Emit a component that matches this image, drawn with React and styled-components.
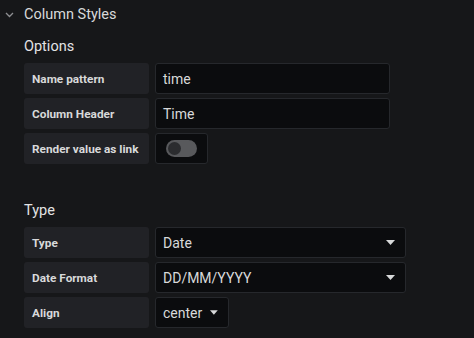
import React from "react";
import styled, { createGlobalStyle } from "styled-components";

const Global = createGlobalStyle`
  html, body { margin: 0; padding: 0; background: #161719; }
  body { font-family: Roboto, "Liberation Sans", sans-serif; color: #d8d9da; }
  #root { width: 474px; height: 338px; overflow: hidden; background: #161719; }
`;

const Page = styled.div`
  display: flex;
  flex-direction: column;
`;

const Header = styled.div`
  display: flex;
  align-items: center;
  height: 29px;
  padding-left: 5px;
  gap: 10px;
  font-size: 14.5px;
  color: #d8d9da;
`;

const Body = styled.div`
  display: flex;
  flex-direction: column;
  padding-left: 24px;
`;

const SectionTitle = styled.div`
  font-size: 14.5px;
  line-height: 20px;
  margin-top: ${(p) => p.$top}px;
  margin-bottom: 6px;
  color: #e3e3e4;
`;

const Rows = styled.div`
  display: flex;
  flex-direction: column;
  gap: 4px;
`;

const Row = styled.div`
  display: flex;
  gap: 6px;
  height: 31px;
`;

const Label = styled.div`
  width: 125px;
  box-sizing: border-box;
  background: #212226;
  border-radius: 3px;
  display: flex;
  align-items: center;
  padding-left: 8px;
  font-size: 11.8px;
  font-weight: 700;
  color: #d8d9da;
`;

const Field = styled.div`
  width: ${(p) => p.$w}px;
  box-sizing: border-box;
  background: #0b0c0e;
  border: 1px solid #26282c;
  border-radius: 3px;
  display: flex;
  align-items: center;
  justify-content: ${(p) => (p.$center ? "center" : "space-between")};
  padding: 0 ${(p) => (p.$center ? 0 : 10)}px 0 ${(p) => (p.$center ? 0 : 7)}px;
  gap: 8px;
  font-size: 14px;
  color: #d8d9da;
`;

const Toggle = styled.div`
  width: 31px;
  height: 17px;
  border-radius: 9px;
  background: #58595c;
  display: flex;
  align-items: center;
  padding-left: 2px;
  box-sizing: border-box;
`;

const Knob = styled.div`
  width: 13px;
  height: 13px;
  border-radius: 50%;
  background: #2b2c2f;
`;

const Caret = () => (
  <svg width="9" height="5" viewBox="0 0 9 5">
    <path d="M0 0 L9 0 L4.5 5 Z" fill="#d8d9da" />
  </svg>
);

const Chevron = () => (
  <svg width="9" height="6" viewBox="0 0 9 6">
    <path d="M1 1 L4.5 4.5 L8 1" stroke="#8e8f92" strokeWidth="1.3" fill="none" />
  </svg>
);

export default function App() {
  return (
    <Page>
      <Global />
      <Header>
        <Chevron />
        <span>Column Styles</span>
      </Header>
      <Body>
        <SectionTitle $top={8}>Options</SectionTitle>
        <Rows>
          <Row>
            <Label>Name pattern</Label>
            <Field $w={235}>time</Field>
          </Row>
          <Row>
            <Label>Column Header</Label>
            <Field $w={235}>Time</Field>
          </Row>
          <Row>
            <Label>Render value as link</Label>
            <Field $w={53} $center>
              <Toggle>
                <Knob />
              </Toggle>
            </Field>
          </Row>
        </Rows>
        <SectionTitle $top={37}>Type</SectionTitle>
        <Rows>
          <Row>
            <Label>Type</Label>
            <Field $w={251}>
              <span>Date</span>
              <Caret />
            </Field>
          </Row>
          <Row>
            <Label>Date Format</Label>
            <Field $w={251}>
              <span>DD/MM/YYYY</span>
              <Caret />
            </Field>
          </Row>
          <Row>
            <Label>Align</Label>
            <Field $w={74}>
              <span>center</span>
              <Caret />
            </Field>
          </Row>
        </Rows>
      </Body>
    </Page>
  );
}
